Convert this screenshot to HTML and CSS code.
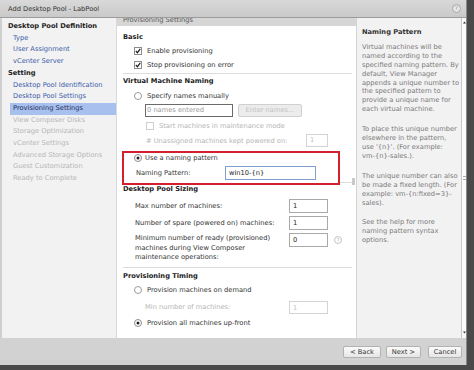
FILE: index.html
```html
<!DOCTYPE html>
<html lang="en">
<head>
    <meta charset="UTF-8">
    <title>Add Desktop Pool - LabPool</title>
    <link rel="stylesheet" href="styles.css">
</head>
<body>
    <div class="window">
        <div class="titlebar">
            <span class="title">Add Desktop Pool - LabPool</span>
            <span class="help-btn">?</span>
        </div>
        <div class="body">
            <nav class="steps">
                <div class="group">Desktop Pool Definition</div>
                <a class="step" href="#">Type</a>
                <a class="step" href="#">User Assignment</a>
                <a class="step" href="#">vCenter Server</a>
                <div class="group">Setting</div>
                <a class="step" href="#">Desktop Pool Identification</a>
                <a class="step" href="#">Desktop Pool Settings</a>
                <a class="step current" href="#">Provisioning Settings</a>
                <span class="step off">View Composer Disks</span>
                <span class="step off">Storage Optimization</span>
                <span class="step off">vCenter Settings</span>
                <span class="step off">Advanced Storage Options</span>
                <span class="step off">Guest Customization</span>
                <span class="step off">Ready to Complete</span>
            </nav>

            <main class="page">
                <div class="page-title"><span>Provisioning Settings</span></div>

                <h2 class="heading basic">Basic</h2>
                <label class="opt ind1 r-enable">
                    <svg class="box" width="8" height="8" viewBox="0 0 8 8"><rect x=".5" y=".5" width="7" height="7" fill="#fff" stroke="#8c8c8c"/><path d="M1.8 4l1.6 1.7L6.3 1.8" fill="none" stroke="#222" stroke-width="1.2"/></svg>
                    Enable provisioning
                </label>
                <label class="opt ind1 r-stop">
                    <svg class="box" width="8" height="8" viewBox="0 0 8 8"><rect x=".5" y=".5" width="7" height="7" fill="#fff" stroke="#8c8c8c"/><path d="M1.8 4l1.6 1.7L6.3 1.8" fill="none" stroke="#222" stroke-width="1.2"/></svg>
                    Stop provisioning on error
                </label>
                <hr class="sep s1">

                <h2 class="heading vmn">Virtual Machine Naming</h2>
                <label class="opt ind1 r-specify">
                    <svg class="box" width="8" height="8" viewBox="0 0 8 8"><circle cx="4" cy="4" r="3.5" fill="#fff" stroke="#9a9a9a"/></svg>
                    Specify names manually
                </label>
                <div class="names-row">
                    <span class="field names">0 names entered</span>
                    <span class="btn-off">Enter names...</span>
                </div>
                <label class="opt ind2 off r-maint">
                    <svg class="box" width="8" height="8" viewBox="0 0 8 8"><rect x=".5" y=".5" width="7" height="7" fill="#fff" stroke="#cfcfcf"/></svg>
                    Start machines in maintenance mode
                </label>
                <div class="unassigned-row off">
                    <span># Unassigned machines kept powered on:</span>
                    <span class="field small dim">1</span>
                </div>

                <div class="pattern-box">
                    <label class="opt r-use">
                        <svg class="box" width="8" height="8" viewBox="0 0 8 8"><circle cx="4" cy="4" r="3.5" fill="#fff" stroke="#8c8c8c"/><circle cx="4" cy="4" r="1.5" fill="#222"/></svg>
                        Use a naming pattern
                    </label>
                    <div class="pattern-row">
                        <span class="pattern-label">Naming Pattern:</span>
                        <span class="field focus">win10-{n}</span>
                    </div>
                </div>
                <hr class="sep s2">

                <h2 class="heading sizing">Desktop Pool Sizing</h2>
                <div class="num-row r-max">
                    <span class="num-label">Max number of machines:</span>
                    <span class="field num">1</span>
                </div>
                <div class="num-row r-spare">
                    <span class="num-label">Number of spare (powered on) machines:</span>
                    <span class="field num">1</span>
                </div>
                <div class="num-row r-min">
                    <span class="num-label multi">Minimum number of ready (provisioned)<br>machines during View Composer<br>maintenance operations:</span>
                    <span class="field num">0</span>
                    <span class="qmark">?</span>
                </div>
                <hr class="sep s3">

                <h2 class="heading timing">Provisioning Timing</h2>
                <label class="opt ind1 r-demand">
                    <svg class="box" width="8" height="8" viewBox="0 0 8 8"><circle cx="4" cy="4" r="3.5" fill="#fff" stroke="#9a9a9a"/></svg>
                    Provision machines on demand
                </label>
                <div class="num-row r-minnum off">
                    <span class="num-label">Min number of machines:</span>
                    <span class="field num dim">1</span>
                </div>
                <label class="opt ind1 r-upfront">
                    <svg class="box" width="8" height="8" viewBox="0 0 8 8"><circle cx="4" cy="4" r="3.5" fill="#fff" stroke="#8c8c8c"/><circle cx="4" cy="4" r="1.5" fill="#222"/></svg>
                    Provision all machines up-front
                </label>

                <span class="splitter"></span>
            </main>

            <aside class="help">
                <h3>Naming Pattern</h3>
                <p>Virtual machines will be<br>named according to the<br>specified naming pattern. By<br>default, View Manager<br>appends a unique number to<br>the specified pattern to<br>provide a unique name for<br>each virtual machine.</p>
                <p>To place this unique number<br>elsewhere in the pattern,<br>use '{n}'. (For example:<br>vm-{n}-sales.).</p>
                <p>The unique number can also<br>be made a fixed length. (For<br>example: vm-{n:fixed=3}-<br>sales).</p>
                <p>See the help for more<br>naming pattern syntax<br>options.</p>
            </aside>

            <div class="scrollbar">
                <svg width="5" height="5" viewBox="0 0 5 5"><path d="M1 3.5h3L2.5 1.5z" fill="#333"/></svg>
                <span class="grip"></span>
                <svg width="5" height="5" viewBox="0 0 5 5"><path d="M1 1.5h3L2.5 3.5z" fill="#333"/></svg>
            </div>
        </div>
        <div class="footer">
            <button class="btn">&lt; Back</button>
            <button class="btn next">Next &gt;</button>
            <button class="btn cancel">Cancel</button>
        </div>
    </div>
</body>
</html>
```

FILE: styles.css
```css
body {
    margin: 0;
    width: 474px;
    height: 370px;
    overflow: hidden;
    background-color: #4a4a4a;
    font-family: "DejaVu Sans", Verdana, sans-serif;
    font-size: 6.7px;
    color: #333;
}

.window {
    width: 467px;
    height: 365px;
    display: flex;
    flex-direction: column;
    background-color: #d2d2d2;
    border-right: 1px solid #8a8a8a;
    box-sizing: border-box;
}

/* title bar */

.titlebar {
    height: 18px;
    display: flex;
    align-items: center;
    justify-content: space-between;
    padding: 0 5px 0 8px;
    background: linear-gradient(#d9d9d9, #c9c9c9);
    border-bottom: 1px solid #9c9c9c;
    box-sizing: border-box;
    color: #333;
}

.help-btn {
    width: 7px;
    height: 7px;
    border: 1px solid #a8a8a8;
    border-radius: 50%;
    font-size: 5.5px;
    line-height: 7px;
    text-align: center;
    color: #999;
    background-color: #e6e6e6;
}

.body {
    height: 320px;
    display: flex;
}

/* wizard steps */

.steps {
    width: 114px;
    flex: none;
    display: flex;
    flex-direction: column;
    padding-top: 3px;
    background-color: #f2f2f2;
    border-left: 2px solid #cfcfcf;
    border-right: 1px solid #dadada;
    line-height: 11.7px;
}

.steps .group {
    padding-left: 6px;
    font-weight: bold;
    color: #222;
}

.steps .step {
    margin-left: 8px;
    padding-left: 3px;
    text-decoration: none;
    color: #3a5aa8;
}

.steps .step.current {
    background-color: #a8c0ee;
    color: #1f2f5a;
}

.steps .step.off {
    color: #b6b6b6;
}

/* main settings page */

.page {
    flex: 1;
    position: relative;
    background-color: #fff;
    display: flex;
    flex-direction: column;
    align-items: flex-start;
}

.page-title {
    align-self: stretch;
    height: 8px;
    overflow: hidden;
    padding-left: 6px;
    background-color: #d6d6d6;
    color: #555;
}

.page-title span {
    display: block;
    margin-top: -2px;
    line-height: 9px;
}

.heading {
    margin: 0 0 0 6px;
    height: 12px;
    line-height: 12px;
    font-size: 6.7px;
    font-weight: bold;
    color: #222;
}

.basic { margin-top: 5px; }
.vmn { margin-top: 1px; }
.sizing { margin-top: 0; }
.timing { margin-top: 2px; }

.opt {
    display: flex;
    align-items: center;
    gap: 5px;
    height: 12px;
}

.opt .box {
    flex: none;
}

.ind1 { margin-left: 17px; }
.ind2 { margin-left: 29px; }

.r-enable { margin-top: 2px; }
.r-stop { margin-top: 2px; }
.r-specify { margin-top: 3px; }
.r-maint { margin-top: 3px; }
.r-demand { margin-top: 2px; }
.r-upfront { margin-top: 3px; }

.off {
    color: #b4b4b4;
}

.sep {
    align-self: stretch;
    margin: 0 4px 0 6px;
    border: 0;
    border-top: 1px solid #dcdcdc;
    height: 0;
}

.s1 { margin-top: 2px; }
.s2 { margin-top: -3px; }
.s3 { margin-top: 4px; }

.field {
    display: block;
    height: 13px;
    line-height: 11px;
    padding: 0 3px;
    border: 1px solid #a9a9a9;
    box-sizing: border-box;
    background-color: #fff;
    color: #222;
    white-space: nowrap;
}

.field.dim {
    border-color: #d4d4d4;
    color: #c4c4c4;
}

.names-row {
    display: flex;
    gap: 5px;
    margin: 2px 0 0 28px;
}

.field.names {
    width: 88px;
    padding-left: 1px;
    border-color: #6a6a6a;
    color: #9a9a9a;
}

.btn-off {
    width: 64px;
    height: 13px;
    line-height: 11px;
    box-sizing: border-box;
    border: 1px solid #d0d0d0;
    border-radius: 2px;
    background-color: #ececec;
    color: #c2c2c2;
    text-align: center;
}

.unassigned-row {
    display: flex;
    align-items: center;
    justify-content: space-between;
    width: 182px;
    margin: 2px 0 0 29px;
}

.field.small {
    width: 22px;
}

/* highlighted naming pattern */

.pattern-box {
    position: relative;
    z-index: 1;
    width: 218px;
    margin: 4px 0 0 5px;
    padding: 0 0 3px 10px;
    border: 2px solid #d4202c;
    box-sizing: border-box;
    background-color: #fff;
}

.r-use {
    height: 9px;
    gap: 3px;
}

.pattern-row {
    display: flex;
    align-items: center;
    margin-top: 4px;
    height: 14px;
}

.pattern-label {
    width: 91px;
    padding-left: 2px;
    box-sizing: border-box;
}

.field.focus {
    width: 91px;
    height: 14px;
    line-height: 12px;
    border-color: #7f9fcf;
}

/* sizing rows */

.num-row {
    display: flex;
    align-items: center;
    margin-left: 18px;
    height: 14px;
}

.num-label {
    width: 154px;
}

.field.num {
    width: 39px;
    height: 14px;
    line-height: 12px;
}

.r-max { margin-top: 4px; }
.r-spare { margin-top: 3px; }

.r-min {
    margin-top: 3px;
    height: auto;
    align-items: flex-start;
}

.num-label.multi {
    padding-top: 1px;
    line-height: 9.5px;
}

.r-minnum {
    margin: 5px 0 0 28px;
    height: 13px;
}

.r-minnum .num-label {
    width: 144px;
}

.r-minnum .field {
    height: 13px;
}

.qmark {
    width: 6px;
    height: 6px;
    margin: 3px 0 0 6px;
    border: 1px solid #c4c4c4;
    border-radius: 50%;
    font-size: 5px;
    line-height: 6px;
    text-align: center;
    color: #aaa;
}

.splitter {
    position: absolute;
    right: 1px;
    top: 160px;
    width: 3px;
    height: 7px;
    background-color: #c9c9c9;
}

/* help side panel */

.help {
    width: 105px;
    flex: none;
    padding: 10px 0 0 5px;
    box-sizing: border-box;
    background-color: #f2f2f2;
    border-left: 1px solid #d4d4d4;
    line-height: 8.9px;
    white-space: nowrap;
    overflow: hidden;
    color: #7a7a7a;
}

.help h3 {
    margin: 0 0 6px;
    font-size: 6.7px;
    color: #333;
}

.help p {
    margin: 0 0 11px;
}

.scrollbar {
    width: 5px;
    flex: none;
    display: flex;
    flex-direction: column;
    align-items: center;
    justify-content: space-between;
    padding: 2px 0 3px;
    box-sizing: border-box;
    background-color: #fbfbfb;
    border-left: 1px solid #c8c8c8;
}

.grip {
    width: 3px;
    height: 4px;
    border-top: 1px solid #aaa;
    border-bottom: 1px solid #aaa;
    box-sizing: border-box;
}

/* footer buttons */

.footer {
    flex: 1;
    display: flex;
    align-items: flex-start;
    justify-content: flex-end;
    padding: 8px 4px 0 0;
    background-color: #d2d2d2;
}

.btn {
    height: 12px;
    width: 38px;
    margin: 0;
    padding: 0;
    font-family: inherit;
    font-size: 6.7px;
    color: #333;
    background: linear-gradient(#fafafa, #e6e6e6);
    border: 1px solid #b2b2b2;
    border-radius: 2px;
}

.btn.next {
    width: 35px;
    margin-left: 5px;
}

.btn.cancel {
    width: 34px;
    margin-left: 7px;
}
```
